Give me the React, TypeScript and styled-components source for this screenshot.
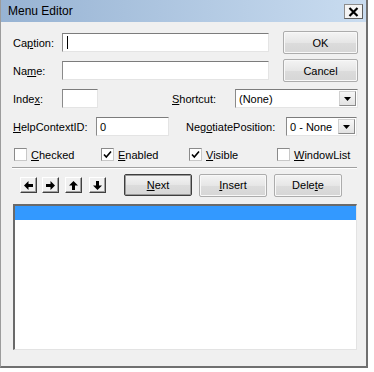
import styled, { createGlobalStyle } from 'styled-components';

let GlobalStyle = createGlobalStyle`
  html, body {
    margin: 0;
    padding: 0;
    background: #ffffff;
  }
  body {
    font-family: Tahoma, "Liberation Sans", Arial, sans-serif;
    font-size: 11px;
    color: #000000;
  }
`;

let Window = styled.div`
  width: 368px;
  height: 368px;
  box-sizing: border-box;
  background: #f0f0f0;
  border-left: 1px solid #9c9c9c;
  border-right: 2px solid #707070;
  border-bottom: 2px solid #707070;
  display: flex;
  flex-direction: column;
`;

let TitleBar = styled.div`
  height: 22px;
  flex: none;
  display: flex;
  align-items: center;
  justify-content: space-between;
  padding: 0 3px 0 7px;
  background: linear-gradient(to right, #97b3d3, #c9dcf0);
  font-family: "Liberation Sans", Arial, sans-serif;
  font-size: 12px;
`;

let CloseButton = styled.div`
  width: 19px;
  height: 15px;
  box-sizing: border-box;
  margin-top: 1px;
  background: #f4f4f4;
  border: 1px solid #8c8c8c;
  border-right-color: #5f5f5f;
  border-bottom-color: #5f5f5f;
  display: flex;
  align-items: center;
  justify-content: center;
`;

let Body = styled.div`
  padding: 9px 0 0 12px;
  display: flex;
  flex-direction: column;
`;

let Row = styled.div<{ $top: number; $h: number }>`
  display: flex;
  align-items: center;
  height: ${p => p.$h}px;
  margin-top: ${p => p.$top}px;
`;

let Label = styled.span<{ $w: number; $left?: number }>`
  width: ${p => p.$w}px;
  margin-left: ${p => p.$left || 0}px;
  flex: none;
  white-space: nowrap;
`;

let TextBox = styled.div<{ $w: number }>`
  width: ${p => p.$w}px;
  height: 19px;
  box-sizing: border-box;
  background: #ffffff;
  border: 1px solid #a8a8a8;
  border-top-color: #7c7c7c;
  border-left-color: #8a8a8a;
  border-right-color: #e4e4e4;
  border-bottom-color: #e4e4e4;
  display: flex;
  align-items: center;
  padding-left: 3px;
  flex: none;
`;

let Caret = styled.span`
  width: 1px;
  height: 13px;
  margin-left: 1px;
  background: #000000;
`;

let Combo = styled(TextBox)`
  justify-content: space-between;
  padding: 1px;
`;

let ComboText = styled.span`
  padding-left: 2px;
`;

let DropButton = styled.div`
  width: 17px;
  height: 15px;
  box-sizing: border-box;
  background: linear-gradient(#f7f7f7, #e2e2e2);
  border: 1px solid #d0d0d0;
  border-right-color: #8a8a8a;
  border-bottom-color: #8a8a8a;
  display: flex;
  align-items: center;
  justify-content: center;
`;

let Button = styled.div<{ $w: number; $default?: boolean; $left?: number }>`
  width: ${p => p.$w}px;
  height: ${p => (p.$default ? 22 : 23)}px;
  margin-left: ${p => p.$left || 0}px;
  box-sizing: border-box;
  flex: none;
  display: flex;
  align-items: center;
  justify-content: center;
  border-radius: 2px;
  background: linear-gradient(#f4f4f4, #e6e6e6 50%, #dcdcdc 51%, #d6d6d6);
  border: 1px solid ${p => (p.$default ? '#3e3e3e' : '#acacac')};
  box-shadow: ${p => (p.$default ? 'inset 0 0 0 1px #9a9a9a' : 'inset 0 0 0 1px #f8f8f8')};
`;

let ArrowButton = styled.div<{ $left: number }>`
  width: 17px;
  height: 16px;
  margin-left: ${p => p.$left}px;
  box-sizing: border-box;
  flex: none;
  background: #f0f0f0;
  border: 1px solid #ffffff;
  border-right-color: #404040;
  border-bottom-color: #404040;
  box-shadow: inset -1px -1px 0 #a0a0a0;
  display: flex;
  align-items: center;
  justify-content: center;
`;

let CheckRow = styled.div`
  display: grid;
  grid-template-columns: 87px 88px 88px auto;
  margin-top: 12px;
  padding-left: 1px;
  height: 13px;
`;

let CheckItem = styled.div`
  display: flex;
  align-items: center;
  gap: 4px;
`;

let CheckBox = styled.div`
  width: 13px;
  height: 13px;
  box-sizing: border-box;
  background: #ffffff;
  border: 1px solid #8a8a8a;
  border-right-color: #c8c8c8;
  border-bottom-color: #c8c8c8;
  display: flex;
  align-items: center;
  justify-content: center;
`;

let Separator = styled.div`
  width: 345px;
  height: 1px;
  margin: 6px 0 0 -1px;
  background: #a0a0a0;
  border-bottom: 1px solid #ffffff;
`;

let ListBox = styled.div`
  width: 344px;
  height: 146px;
  margin-top: 8px;
  box-sizing: border-box;
  background: #ffffff;
  border: 1px solid #e3e3e3;
  border-top: 2px solid #6a6a6a;
  border-left: 2px solid #6a6a6a;
`;

let SelectedItem = styled.div`
  height: 14px;
  background: #3399ff;
`;

// bold arrow pointing left; rotated for the other directions
let Arrow = ({ rotate }: { rotate: number }) => (
  <svg width="9" height="9" viewBox="0 0 9 9" style={{ transform: `rotate(${rotate}deg)` }}>
    <polygon points="0,4.5 4.5,0 4.5,3 9,3 9,6 4.5,6 4.5,9" fill="#000" />
  </svg>
);

let DownTriangle = () => (
  <svg width="7" height="4" viewBox="0 0 7 4">
    <polygon points="0,0 7,0 3.5,4" fill="#000" />
  </svg>
);

let Tick = () => (
  <svg width="9" height="9" viewBox="0 0 9 9">
    <path d="M1 4.5 L3.3 7 L8 1.5" stroke="#000" strokeWidth="1.6" fill="none" />
  </svg>
);

let Check = ({ checked, children }: { checked?: boolean; children: React.ReactNode }) => (
  <CheckItem>
    <CheckBox>{checked && <Tick />}</CheckBox>
    <span>{children}</span>
  </CheckItem>
);

export default function App() {
  return (
    <>
      <GlobalStyle />
      <Window>
        <TitleBar>
          <span>Menu Editor</span>
          <CloseButton>
            <svg width="11" height="10" viewBox="0 0 11 10">
              <path d="M1.5 1 L9.5 9 M9.5 1 L1.5 9" stroke="#000" strokeWidth="2.2" />
            </svg>
          </CloseButton>
        </TitleBar>
        <Body>
          <Row $top={0} $h={23}>
            <Label $w={49}>
              Ca<u>p</u>tion:
            </Label>
            <TextBox $w={207}>
              <Caret />
            </TextBox>
            <Button $w={75} $left={14}>
              OK
            </Button>
          </Row>
          <Row $top={5} $h={23}>
            <Label $w={49}>
              Na<u>m</u>e:
            </Label>
            <TextBox $w={207} />
            <Button $w={75} $left={14}>
              Cancel
            </Button>
          </Row>
          <Row $top={7} $h={19}>
            <Label $w={49}>
              Inde<u>x</u>:
            </Label>
            <TextBox $w={36} />
            <Label $w={63} $left={74}>
              <u>S</u>hortcut:
            </Label>
            <Combo $w={123}>
              <ComboText>(None)</ComboText>
              <DropButton>
                <DownTriangle />
              </DropButton>
            </Combo>
          </Row>
          <Row $top={9} $h={19}>
            <Label $w={83}>
              <u>H</u>elpContextID:
            </Label>
            <TextBox $w={73}>0</TextBox>
            <Label $w={100} $left={17}>
              Neg<u>o</u>tiatePosition:
            </Label>
            <Combo $w={71}>
              <ComboText>0 - None</ComboText>
              <DropButton>
                <DownTriangle />
              </DropButton>
            </Combo>
          </Row>
          <CheckRow>
            <Check>
              <u>C</u>hecked
            </Check>
            <Check checked>
              <u>E</u>nabled
            </Check>
            <Check checked>
              <u>V</u>isible
            </Check>
            <Check>
              <u>W</u>indowList
            </Check>
          </CheckRow>
          <Separator />
          <Row $top={5} $h={22}>
            <ArrowButton $left={7}>
              <Arrow rotate={0} />
            </ArrowButton>
            <ArrowButton $left={5}>
              <Arrow rotate={180} />
            </ArrowButton>
            <ArrowButton $left={6}>
              <Arrow rotate={90} />
            </ArrowButton>
            <ArrowButton $left={7}>
              <Arrow rotate={270} />
            </ArrowButton>
            <Button $w={68} $default $left={18}>
              <span>
                <u>N</u>ext
              </span>
            </Button>
            <Button $w={68} $left={7}>
              <span>
                <u>I</u>nsert
              </span>
            </Button>
            <Button $w={68} $left={7}>
              <span>
                Dele<u>t</u>e
              </span>
            </Button>
          </Row>
          <ListBox>
            <SelectedItem />
          </ListBox>
        </Body>
      </Window>
    </>
  );
}
